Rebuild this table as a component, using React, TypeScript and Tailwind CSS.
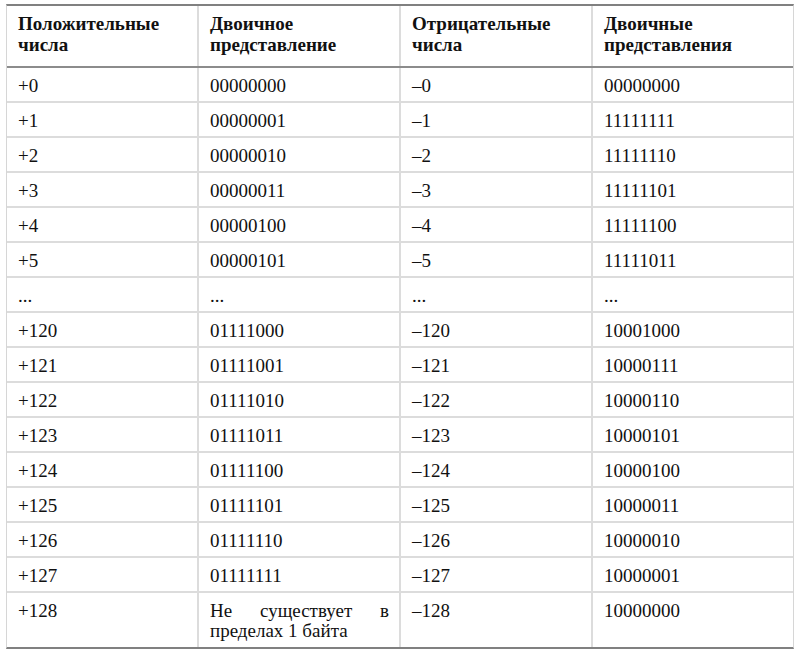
import React from 'react';

const rows: [string, string, string, string][] = [
  ['+0', '00000000', '–0', '00000000'],
  ['+1', '00000001', '–1', '11111111'],
  ['+2', '00000010', '–2', '11111110'],
  ['+3', '00000011', '–3', '11111101'],
  ['+4', '00000100', '–4', '11111100'],
  ['+5', '00000101', '–5', '11111011'],
  ['...', '...', '...', '...'],
  ['+120', '01111000', '–120', '10001000'],
  ['+121', '01111001', '–121', '10000111'],
  ['+122', '01111010', '–122', '10000110'],
  ['+123', '01111011', '–123', '10000101'],
  ['+124', '01111100', '–124', '10000100'],
  ['+125', '01111101', '–125', '10000011'],
  ['+126', '01111110', '–126', '10000010'],
  ['+127', '01111111', '–127', '10000001'],
];

const widths = ['w-[192px]', 'w-[202px]', 'w-[192px]', 'w-[202px]'];

function Cell({ i, children }: { i: number; children: React.ReactNode }) {
  return (
    <div
      className={`${widths[i]} shrink-0 pl-[11px] pr-[10px] pt-[8px] ${
        i < 3 ? 'border-r-2 border-[#dcdcdc]' : ''
      }`}
    >
      {children}
    </div>
  );
}

export default function App() {
  return (
    <div className="min-h-screen bg-white pt-[4px] pl-[6px] font-serif text-[19px] leading-[20px] text-[#111]">
      <div className="w-[788px] font-[Liberation_Serif] border-t-2 border-b-2 border-t-[#808080] border-b-[#808080] border-x border-x-[#d6d6d6]">
        <div className="flex h-[62px] border-b-2 border-[#8c8c8c] font-bold leading-[21px]">
          <div className="w-[192px] shrink-0 border-r-2 border-[#dcdcdc] pl-[11px] pt-[7px]">
            Положительные
            <br />
            числа
          </div>
          <div className="w-[202px] shrink-0 border-r-2 border-[#dcdcdc] pl-[11px] pt-[7px]">
            Двоичное
            <br />
            представление
          </div>
          <div className="w-[192px] shrink-0 border-r-2 border-[#dcdcdc] pl-[11px] pt-[7px]">
            Отрицательные
            <br />
            числа
          </div>
          <div className="w-[202px] shrink-0 pl-[11px] pt-[7px]">
            Двоичные
            <br />
            представления
          </div>
        </div>
        {rows.map((r) => (
          <div key={r[0]} className="flex h-[35px] border-b-2 border-[#dcdcdc]">
            {r.map((v, i) => (
              <Cell key={i} i={i}>
                {v}
              </Cell>
            ))}
          </div>
        ))}
        <div className="flex h-[54px]">
          <Cell i={0}>+128</Cell>
          <Cell i={1}>
            <p className="text-justify [text-align-last:left]">Не существует в пределах 1 байта</p>
          </Cell>
          <Cell i={2}>–128</Cell>
          <Cell i={3}>10000000</Cell>
        </div>
      </div>
    </div>
  );
}
